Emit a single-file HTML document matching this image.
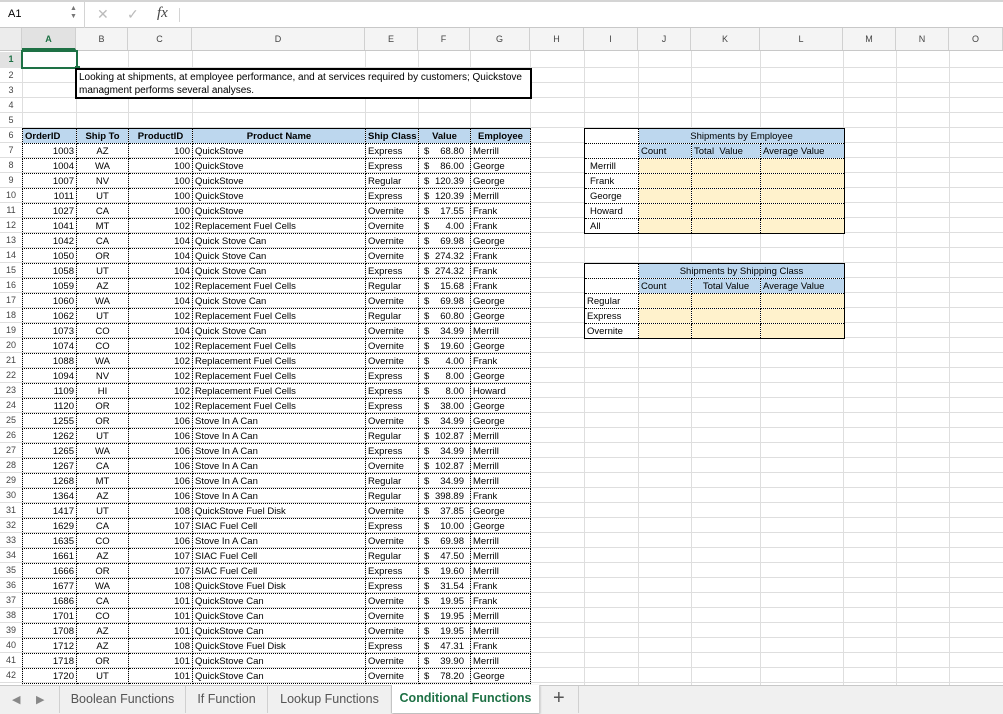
<!DOCTYPE html>
<html><head><meta charset="utf-8">
<style>
*{box-sizing:border-box;margin:0;padding:0}
body{width:1003px;height:714px;overflow:hidden;background:#fff;font-family:"Liberation Sans",sans-serif;position:relative;color:#000}
.abs{position:absolute}
#fb{left:0;top:0;width:1003px;height:28px;background:#fff;border-top:2px solid #d4d4d4;border-bottom:1px solid #c8c8c8}
#colh{left:0;top:28px;width:1003px;height:23px;background:#f4f4f4;border-bottom:1px solid #c8c8c8}
.ch{position:absolute;top:0;height:22px;line-height:22px;text-align:center;font-size:9px;color:#444;border-right:1px solid #d0d0d0}
#grid{left:0;top:51px;width:1003px;height:634px;background:repeating-linear-gradient(to bottom,transparent 0,transparent 14px,#dedede 14px,#dedede 15px);background-position:0 2px}
.vl{position:absolute;top:51px;width:1px;height:634px;background:#dedede}
.rn{position:absolute;left:0;width:22px;height:15px;line-height:15px;text-align:center;font-size:9px;color:#444}
table{border-collapse:collapse;table-layout:fixed;font-size:9.5px}
td{border:1px dotted #000;height:15px;padding:0 2px;white-space:nowrap;overflow:hidden;line-height:13px}
.r{text-align:right}.c{text-align:center}
.hd td{background:#bdd7ee;font-weight:bold;text-align:center;border-top:1.5px solid #000}
.v{display:flex;justify-content:space-between;padding:0 4px 0 3px}
.y{background:#fff2cc}
.b{background:#bdd7ee}
#tabs{left:0;top:685px;width:1003px;height:29px;background:#f0f0f0;border-top:1px solid #c8c8c8;font-size:12.5px;color:#555}
.tab{position:absolute;top:0;height:27px;line-height:26px;border-right:1px solid #d0d0d0;text-align:center}
</style></head><body>
<div id="fb" class="abs">
<div class="abs" style="left:8px;top:6px;font-size:11px">A1</div>
<div class="abs" style="left:70px;top:3px;font-size:7px;color:#777;line-height:8px">▲<br>▼</div>
<div class="abs" style="left:84px;top:0;width:1px;height:26px;background:#d4d4d4"></div>
<div class="abs" style="left:97px;top:4px;font-size:14px;color:#bbb">✕</div>
<div class="abs" style="left:127px;top:4px;font-size:14px;color:#bbb">✓</div>
<div class="abs" style="left:157px;top:3px;font-size:15px;font-style:italic;font-family:'Liberation Serif',serif;color:#444">fx</div>
<div class="abs" style="left:179px;top:6px;width:1px;height:14px;background:#d4d4d4"></div>
</div>
<div id="colh" class="abs">
<div class="ch" style="left:0;width:22px;background:#ececec"></div>
<div class="ch" style="left:22px;width:54px;color:#1e7145;font-weight:bold;background:#e2e2e2;border-bottom:2px solid #1e7145">A</div>
<div class="ch" style="left:76px;width:52px">B</div>
<div class="ch" style="left:128px;width:64px">C</div>
<div class="ch" style="left:192px;width:173px">D</div>
<div class="ch" style="left:365px;width:53px">E</div>
<div class="ch" style="left:418px;width:52px">F</div>
<div class="ch" style="left:470px;width:60px">G</div>
<div class="ch" style="left:530px;width:54px">H</div>
<div class="ch" style="left:584px;width:54px">I</div>
<div class="ch" style="left:638px;width:53px">J</div>
<div class="ch" style="left:691px;width:69px">K</div>
<div class="ch" style="left:760px;width:83px">L</div>
<div class="ch" style="left:843px;width:53px">M</div>
<div class="ch" style="left:896px;width:53px">N</div>
<div class="ch" style="left:949px;width:54px">O</div>
</div>
<div id="grid" class="abs"></div>
<div class="vl" style="left:22px"></div><div class="vl" style="left:76px"></div><div class="vl" style="left:128px"></div><div class="vl" style="left:192px"></div><div class="vl" style="left:365px"></div><div class="vl" style="left:418px"></div><div class="vl" style="left:470px"></div><div class="vl" style="left:530px"></div><div class="vl" style="left:584px"></div><div class="vl" style="left:638px"></div><div class="vl" style="left:691px"></div><div class="vl" style="left:760px"></div><div class="vl" style="left:843px"></div><div class="vl" style="left:896px"></div><div class="vl" style="left:949px"></div>
<div class="rn" style="top:52px;color:#1e7145;font-weight:bold;background:#e2e2e2;height:16px">1</div>
<div class="rn" style="top:68px">2</div><div class="rn" style="top:83px">3</div><div class="rn" style="top:98px">4</div><div class="rn" style="top:113px">5</div><div class="rn" style="top:128px">6</div><div class="rn" style="top:143px">7</div><div class="rn" style="top:158px">8</div><div class="rn" style="top:173px">9</div><div class="rn" style="top:188px">10</div><div class="rn" style="top:203px">11</div><div class="rn" style="top:218px">12</div><div class="rn" style="top:233px">13</div><div class="rn" style="top:248px">14</div><div class="rn" style="top:263px">15</div><div class="rn" style="top:278px">16</div><div class="rn" style="top:293px">17</div><div class="rn" style="top:308px">18</div><div class="rn" style="top:323px">19</div><div class="rn" style="top:338px">20</div><div class="rn" style="top:353px">21</div><div class="rn" style="top:368px">22</div><div class="rn" style="top:383px">23</div><div class="rn" style="top:398px">24</div><div class="rn" style="top:413px">25</div><div class="rn" style="top:428px">26</div><div class="rn" style="top:443px">27</div><div class="rn" style="top:458px">28</div><div class="rn" style="top:473px">29</div><div class="rn" style="top:488px">30</div><div class="rn" style="top:503px">31</div><div class="rn" style="top:518px">32</div><div class="rn" style="top:533px">33</div><div class="rn" style="top:548px">34</div><div class="rn" style="top:563px">35</div><div class="rn" style="top:578px">36</div><div class="rn" style="top:593px">37</div><div class="rn" style="top:608px">38</div><div class="rn" style="top:623px">39</div><div class="rn" style="top:638px">40</div><div class="rn" style="top:653px">41</div><div class="rn" style="top:668px">42</div>
<div class="abs" style="left:21px;top:50px;width:57px;height:19px;border:2px solid #1e7145"></div>
<div class="abs" style="left:75px;top:66px;width:5px;height:5px;background:#1e7145"></div>
<div class="abs" style="left:75px;top:68px;width:457px;height:31px;border:2px solid #000;background:#fff;font-size:10px;line-height:13px;padding:1px 2px">Looking at shipments, at employee performance, and at services required by customers; Quickstove managment performs several analyses.</div>

<table class="abs" style="left:22px;top:128px;width:508px">
<colgroup><col style="width:54px"><col style="width:52px"><col style="width:64px"><col style="width:173px"><col style="width:53px"><col style="width:52px"><col style="width:60px"></colgroup>
<tr class="hd"><td style="text-align:left">OrderID</td><td>Ship To</td><td>ProductID</td><td>Product Name</td><td>Ship Class</td><td>Value</td><td>Employee</td></tr>
<tr><td class="r">1003</td><td class="c">AZ</td><td class="r">100</td><td>QuickStove</td><td>Express</td><td><div class="v"><span>$</span><span>68.80</span></div></td><td>Merrill</td></tr>
<tr><td class="r">1004</td><td class="c">WA</td><td class="r">100</td><td>QuickStove</td><td>Express</td><td><div class="v"><span>$</span><span>86.00</span></div></td><td>George</td></tr>
<tr><td class="r">1007</td><td class="c">NV</td><td class="r">100</td><td>QuickStove</td><td>Regular</td><td><div class="v"><span>$</span><span>120.39</span></div></td><td>George</td></tr>
<tr><td class="r">1011</td><td class="c">UT</td><td class="r">100</td><td>QuickStove</td><td>Express</td><td><div class="v"><span>$</span><span>120.39</span></div></td><td>Merrill</td></tr>
<tr><td class="r">1027</td><td class="c">CA</td><td class="r">100</td><td>QuickStove</td><td>Overnite</td><td><div class="v"><span>$</span><span>17.55</span></div></td><td>Frank</td></tr>
<tr><td class="r">1041</td><td class="c">MT</td><td class="r">102</td><td>Replacement Fuel Cells</td><td>Overnite</td><td><div class="v"><span>$</span><span>4.00</span></div></td><td>Frank</td></tr>
<tr><td class="r">1042</td><td class="c">CA</td><td class="r">104</td><td>Quick Stove Can</td><td>Overnite</td><td><div class="v"><span>$</span><span>69.98</span></div></td><td>George</td></tr>
<tr><td class="r">1050</td><td class="c">OR</td><td class="r">104</td><td>Quick Stove Can</td><td>Overnite</td><td><div class="v"><span>$</span><span>274.32</span></div></td><td>Frank</td></tr>
<tr><td class="r">1058</td><td class="c">UT</td><td class="r">104</td><td>Quick Stove Can</td><td>Express</td><td><div class="v"><span>$</span><span>274.32</span></div></td><td>Frank</td></tr>
<tr><td class="r">1059</td><td class="c">AZ</td><td class="r">102</td><td>Replacement Fuel Cells</td><td>Regular</td><td><div class="v"><span>$</span><span>15.68</span></div></td><td>Frank</td></tr>
<tr><td class="r">1060</td><td class="c">WA</td><td class="r">104</td><td>Quick Stove Can</td><td>Overnite</td><td><div class="v"><span>$</span><span>69.98</span></div></td><td>George</td></tr>
<tr><td class="r">1062</td><td class="c">UT</td><td class="r">102</td><td>Replacement Fuel Cells</td><td>Regular</td><td><div class="v"><span>$</span><span>60.80</span></div></td><td>George</td></tr>
<tr><td class="r">1073</td><td class="c">CO</td><td class="r">104</td><td>Quick Stove Can</td><td>Overnite</td><td><div class="v"><span>$</span><span>34.99</span></div></td><td>Merrill</td></tr>
<tr><td class="r">1074</td><td class="c">CO</td><td class="r">102</td><td>Replacement Fuel Cells</td><td>Overnite</td><td><div class="v"><span>$</span><span>19.60</span></div></td><td>George</td></tr>
<tr><td class="r">1088</td><td class="c">WA</td><td class="r">102</td><td>Replacement Fuel Cells</td><td>Overnite</td><td><div class="v"><span>$</span><span>4.00</span></div></td><td>Frank</td></tr>
<tr><td class="r">1094</td><td class="c">NV</td><td class="r">102</td><td>Replacement Fuel Cells</td><td>Express</td><td><div class="v"><span>$</span><span>8.00</span></div></td><td>George</td></tr>
<tr><td class="r">1109</td><td class="c">HI</td><td class="r">102</td><td>Replacement Fuel Cells</td><td>Express</td><td><div class="v"><span>$</span><span>8.00</span></div></td><td>Howard</td></tr>
<tr><td class="r">1120</td><td class="c">OR</td><td class="r">102</td><td>Replacement Fuel Cells</td><td>Express</td><td><div class="v"><span>$</span><span>38.00</span></div></td><td>George</td></tr>
<tr><td class="r">1255</td><td class="c">OR</td><td class="r">106</td><td>Stove In A Can</td><td>Overnite</td><td><div class="v"><span>$</span><span>34.99</span></div></td><td>George</td></tr>
<tr><td class="r">1262</td><td class="c">UT</td><td class="r">106</td><td>Stove In A Can</td><td>Regular</td><td><div class="v"><span>$</span><span>102.87</span></div></td><td>Merrill</td></tr>
<tr><td class="r">1265</td><td class="c">WA</td><td class="r">106</td><td>Stove In A Can</td><td>Express</td><td><div class="v"><span>$</span><span>34.99</span></div></td><td>Merrill</td></tr>
<tr><td class="r">1267</td><td class="c">CA</td><td class="r">106</td><td>Stove In A Can</td><td>Overnite</td><td><div class="v"><span>$</span><span>102.87</span></div></td><td>Merrill</td></tr>
<tr><td class="r">1268</td><td class="c">MT</td><td class="r">106</td><td>Stove In A Can</td><td>Regular</td><td><div class="v"><span>$</span><span>34.99</span></div></td><td>Merrill</td></tr>
<tr><td class="r">1364</td><td class="c">AZ</td><td class="r">106</td><td>Stove In A Can</td><td>Regular</td><td><div class="v"><span>$</span><span>398.89</span></div></td><td>Frank</td></tr>
<tr><td class="r">1417</td><td class="c">UT</td><td class="r">108</td><td>QuickStove Fuel Disk</td><td>Overnite</td><td><div class="v"><span>$</span><span>37.85</span></div></td><td>George</td></tr>
<tr><td class="r">1629</td><td class="c">CA</td><td class="r">107</td><td>SIAC Fuel Cell</td><td>Express</td><td><div class="v"><span>$</span><span>10.00</span></div></td><td>George</td></tr>
<tr><td class="r">1635</td><td class="c">CO</td><td class="r">106</td><td>Stove In A Can</td><td>Overnite</td><td><div class="v"><span>$</span><span>69.98</span></div></td><td>Merrill</td></tr>
<tr><td class="r">1661</td><td class="c">AZ</td><td class="r">107</td><td>SIAC Fuel Cell</td><td>Regular</td><td><div class="v"><span>$</span><span>47.50</span></div></td><td>Merrill</td></tr>
<tr><td class="r">1666</td><td class="c">OR</td><td class="r">107</td><td>SIAC Fuel Cell</td><td>Express</td><td><div class="v"><span>$</span><span>19.60</span></div></td><td>Merrill</td></tr>
<tr><td class="r">1677</td><td class="c">WA</td><td class="r">108</td><td>QuickStove Fuel Disk</td><td>Express</td><td><div class="v"><span>$</span><span>31.54</span></div></td><td>Frank</td></tr>
<tr><td class="r">1686</td><td class="c">CA</td><td class="r">101</td><td>QuickStove Can</td><td>Overnite</td><td><div class="v"><span>$</span><span>19.95</span></div></td><td>Frank</td></tr>
<tr><td class="r">1701</td><td class="c">CO</td><td class="r">101</td><td>QuickStove Can</td><td>Overnite</td><td><div class="v"><span>$</span><span>19.95</span></div></td><td>Merrill</td></tr>
<tr><td class="r">1708</td><td class="c">AZ</td><td class="r">101</td><td>QuickStove Can</td><td>Overnite</td><td><div class="v"><span>$</span><span>19.95</span></div></td><td>Merrill</td></tr>
<tr><td class="r">1712</td><td class="c">AZ</td><td class="r">108</td><td>QuickStove Fuel Disk</td><td>Express</td><td><div class="v"><span>$</span><span>47.31</span></div></td><td>Frank</td></tr>
<tr><td class="r">1718</td><td class="c">OR</td><td class="r">101</td><td>QuickStove Can</td><td>Overnite</td><td><div class="v"><span>$</span><span>39.90</span></div></td><td>Merrill</td></tr>
<tr><td class="r">1720</td><td class="c">UT</td><td class="r">101</td><td>QuickStove Can</td><td>Overnite</td><td><div class="v"><span>$</span><span>78.20</span></div></td><td>George</td></tr>
</table>

<table class="abs" style="left:584px;top:128px;width:260px;border:1.5px solid #000;background:#fff">
<colgroup><col style="width:54px"><col style="width:53px"><col style="width:69px"><col style="width:84px"></colgroup>
<tr><td></td><td colspan="3" class="b c">Shipments by Employee</td></tr>
<tr><td></td><td class="b">Count</td><td class="b">Total&nbsp; Value</td><td class="b">Average Value</td></tr>
<tr><td style="padding-left:5px">Merrill</td><td class="y"></td><td class="y"></td><td class="y"></td></tr>
<tr><td style="padding-left:5px">Frank</td><td class="y"></td><td class="y"></td><td class="y"></td></tr>
<tr><td style="padding-left:5px">George</td><td class="y"></td><td class="y"></td><td class="y"></td></tr>
<tr><td style="padding-left:5px">Howard</td><td class="y"></td><td class="y"></td><td class="y"></td></tr>
<tr><td style="padding-left:5px">All</td><td class="y"></td><td class="y"></td><td class="y"></td></tr>
</table>

<table class="abs" style="left:584px;top:263px;width:260px;border:1.5px solid #000;background:#fff">
<colgroup><col style="width:54px"><col style="width:53px"><col style="width:69px"><col style="width:84px"></colgroup>
<tr><td></td><td colspan="3" class="b c">Shipments by Shipping Class</td></tr>
<tr><td></td><td class="b">Count</td><td class="b c">Total Value</td><td class="b">Average Value</td></tr>
<tr><td style="padding-left:2px">Regular</td><td class="y"></td><td class="y"></td><td class="y"></td></tr>
<tr><td style="padding-left:2px">Express</td><td class="y"></td><td class="y"></td><td class="y"></td></tr>
<tr><td style="padding-left:2px">Overnite</td><td class="y"></td><td class="y"></td><td class="y"></td></tr>
</table>

<div id="tabs" class="abs">
<div class="abs" style="left:12px;top:7px;font-size:11px;color:#888">◀</div>
<div class="abs" style="left:36px;top:7px;font-size:11px;color:#888">▶</div>
<div class="tab" style="left:59px;width:127px;border-left:1px solid #d0d0d0">Boolean Functions</div>
<div class="tab" style="left:186px;width:82px">If Function</div>
<div class="tab" style="left:268px;width:124px">Lookup Functions</div>
<div class="tab" style="left:392px;width:148px;background:#fff;color:#1e7145;font-weight:bold;top:-1px;height:28px;box-shadow:0 1px 2px #aaa">Conditional Functions</div>
<div class="abs" style="left:553px;top:1px;font-size:20px;color:#555">+</div>
<div class="abs" style="left:578px;top:0;width:1px;height:27px;background:#d0d0d0"></div>
</div>
</body></html>
